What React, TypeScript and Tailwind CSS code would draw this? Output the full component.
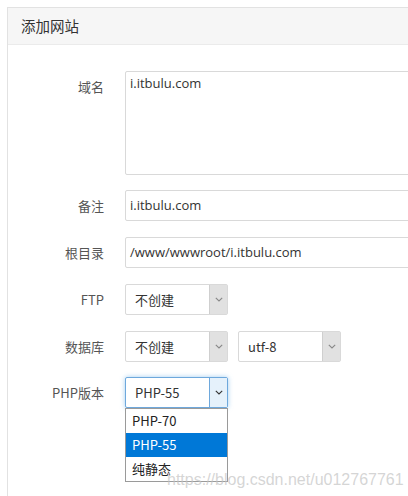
import React from "react";

const cjk = { fontFamily: '"Noto Sans CJK SC", "Noto Sans", sans-serif' };
const latin = { fontFamily: '"Open Sans", "Noto Sans CJK SC", sans-serif' };

function Chevron({ color = "#777" }: { color?: string }) {
  return (
    <svg width="8" height="5" viewBox="0 0 8 5" fill="none">
      <polyline points="0.8,0.8 4,4 7.2,0.8" stroke={color} strokeWidth="1.1" />
    </svg>
  );
}

function Select({ value, focused = false, w = "w-[103px]" }: { value: string; focused?: boolean; w?: string }) {
  return (
    <div
      className={`relative flex h-[31px] ${w} items-stretch rounded-[2px] border bg-white ${
        focused ? "border-[#6ea8dc] shadow-[0_0_5px_rgba(102,175,233,0.6)]" : "border-[#d9d9d9]"
      }`}
    >
      <div className="flex flex-1 items-center pl-[9px] text-[13px] text-[#333]" style={cjk}>
        {value}
      </div>
      <div
        className={`flex w-[18px] items-center justify-center border-l ${
          focused ? "border-[#6ea8dc] bg-[#e5f1fb]" : "border-[#cfcfcf] bg-[#e1e1e1]"
        }`}
      >
        <Chevron color={focused ? "#333" : "#888"} />
      </div>
    </div>
  );
}

function Row({ label, children, mt }: { label: string; children: React.ReactNode; mt: string }) {
  return (
    <div className={`flex items-start ${mt}`}>
      <div className="w-[97px] shrink-0 pr-[1px] text-right text-[13px] leading-[31px] text-[#555]" style={cjk}>
        {label}
      </div>
      <div className="ml-[20px] flex gap-[10px]">{children}</div>
    </div>
  );
}

export default function App() {
  return (
    <div className="relative h-[496px] w-[408px] overflow-hidden bg-white">
      <div className="ml-[7px] mt-[7px] h-[520px] w-[440px] border border-[#e2e2e2]">
        <div
          className="flex h-[37px] items-center border-b border-[#ebebeb] bg-[#f6f6f6] pl-[13px] text-[14.5px] text-[#333]"
          style={cjk}
        >
          添加网站
        </div>
        <div className="pt-[26px]">
          <Row label="域名" mt="mt-0">
            <div
              className="h-[104px] w-[300px] rounded-[2px] border border-[#d9d9d9] bg-white pl-[4px] pt-[2px] text-[13px] text-[#333]"
              style={latin}
            >
              i.itbulu.com
            </div>
          </Row>
          <Row label="备注" mt="mt-[15px]">
            <div
              className="flex h-[31px] w-[300px] items-center rounded-[2px] border border-[#d9d9d9] pl-[4px] text-[13px] text-[#333]"
              style={latin}
            >
              i.itbulu.com
            </div>
          </Row>
          <Row label="根目录" mt="mt-[16px]">
            <div
              className="flex h-[31px] w-[300px] items-center rounded-[2px] border border-[#d9d9d9] pl-[4px] text-[13px] text-[#333]"
              style={latin}
            >
              /www/wwwroot/i.itbulu.com
            </div>
          </Row>
          <Row label="FTP" mt="mt-[16px]">
            <Select value="不创建" />
          </Row>
          <Row label="数据库" mt="mt-[16px]">
            <Select value="不创建" />
            <Select value="utf-8" />
          </Row>
          <Row label="PHP版本" mt="mt-[15px]">
            <div className="relative">
              <Select value="PHP-55" focused />
              <div
                className="absolute left-0 top-[31px] w-[103px] border border-[#9a9a9a] bg-white text-[13px] text-[#222]"
                style={cjk}
              >
                <div className="flex h-[24px] items-center pl-[6px]">PHP-70</div>
                <div className="flex h-[24px] items-center bg-[#0078d7] pl-[6px] text-white">PHP-55</div>
                <div className="flex h-[24px] items-center pl-[6px]">纯静态</div>
              </div>
            </div>
          </Row>
        </div>
      </div>
      <div
        className="pointer-events-none absolute left-[167px] top-[468px] text-[16px] text-[rgba(195,195,195,0.7)]"
        style={{ fontFamily: '"Liberation Sans", Arial, sans-serif' }}
      >
        https://blog.csdn.net/u012767761
      </div>
    </div>
  );
}
